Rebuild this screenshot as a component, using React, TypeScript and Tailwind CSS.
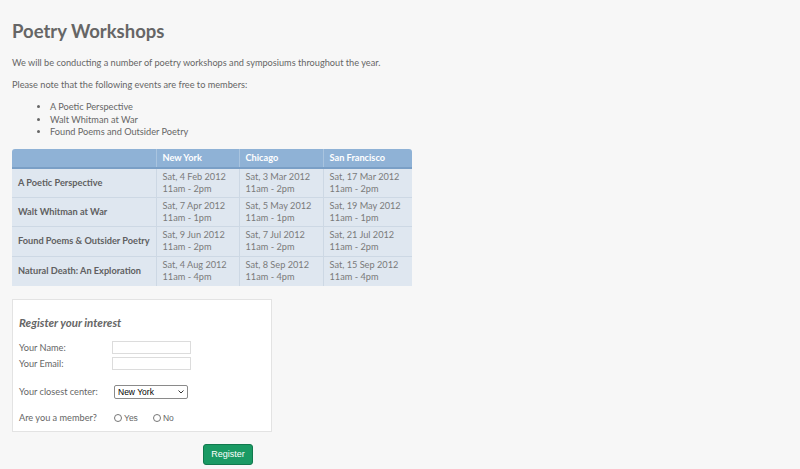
import { useState } from 'react';

const rows = [
  { name: 'A Poetic Perspective', dates: [['Sat, 4 Feb 2012', '11am - 2pm'], ['Sat, 3 Mar 2012', '11am - 2pm'], ['Sat, 17 Mar 2012', '11am - 2pm']] },
  { name: 'Walt Whitman at War', dates: [['Sat, 7 Apr 2012', '11am - 1pm'], ['Sat, 5 May 2012', '11am - 1pm'], ['Sat, 19 May 2012', '11am - 1pm']] },
  { name: 'Found Poems & Outsider Poetry', dates: [['Sat, 9 Jun 2012', '11am - 2pm'], ['Sat, 7 Jul 2012', '11am - 2pm'], ['Sat, 21 Jul 2012', '11am - 2pm']] },
  { name: 'Natural Death: An Exploration', dates: [['Sat, 4 Aug 2012', '11am - 4pm'], ['Sat, 8 Sep 2012', '11am - 4pm'], ['Sat, 15 Sep 2012', '11am - 4pm']] },
];

export default function App() {
  const [member, setMember] = useState('');

  return (
    <div className="min-h-[469px] bg-[#f7f7f7] px-3 pt-[19px] font-['Lato',sans-serif] text-[#666]">
      {/* Header */}
      <h1 className="text-[18.5px] font-bold leading-6 text-[#666]">Poetry Workshops</h1>
      <p className="mt-[14px] text-[9.2px] leading-3">
        We will be conducting a number of poetry workshops and symposiums throughout the year.
      </p>
      <p className="mt-[10px] text-[9.2px] leading-3">Please note that the following events are free to members:</p>
      <ul className="mt-[10px] list-disc pl-[38px] text-[9.2px] leading-[12.5px]">
        <li>A Poetic Perspective</li>
        <li>Walt Whitman at War</li>
        <li>Found Poems and Outsider Poetry</li>
      </ul>

      {/* Schedule table */}
      <table className="mt-[10px] w-[400px] table-fixed border-collapse text-[9.2px]">
        <thead>
          <tr className="h-[19px] bg-[#8fb2d6] text-left font-bold text-white">
            <th className="w-[144px] rounded-tl-[3px] border-b-2 border-[#7a9fc6]"></th>
            <th className="w-[83px] border-b-2 border-l border-[#7a9fc6] border-l-[#a9c4df] px-[6px]">New York</th>
            <th className="w-[84px] border-b-2 border-l border-[#7a9fc6] border-l-[#a9c4df] px-[6px]">Chicago</th>
            <th className="rounded-tr-[3px] border-b-2 border-l border-[#7a9fc6] border-l-[#a9c4df] px-[6px]">San Francisco</th>
          </tr>
        </thead>
        <tbody>
          {rows.map((r, i) => (
            <tr key={i} className="h-[29.5px] border-b border-[#cdd8e4] bg-[#dfe7f0] last:border-b-0">
              <td className="whitespace-nowrap px-[6px] font-bold text-[#606060]">{r.name}</td>
              {r.dates.map((d, j) => (
                <td key={j} className="whitespace-nowrap border-l border-[#cdd8e4] px-[6px] leading-[12px] text-[#7a7a7a]">
                  {d[0]}
                  <br />
                  {d[1]}
                </td>
              ))}
            </tr>
          ))}
        </tbody>
      </table>

      {/* Register form */}
      <div className="mt-[13px] w-[260px] border border-[#e3e3e3] bg-white px-[6px] pb-[6px] pt-[14px] text-[9.2px]">
        <h2 className="text-[11.5px] font-bold italic text-[#666]">Register your interest</h2>
        <div className="mt-[10px] grid grid-cols-[93px_1fr] items-center gap-y-[2px]">
          <label>Your Name:</label>
          <input className="h-[13px] w-[79px] border border-[#dcdcdc] bg-white" />
          <label>Your Email:</label>
          <input className="h-[13px] w-[79px] border border-[#dcdcdc] bg-white" />
        </div>
        <div className="mt-[15px] flex items-center">
          <label className="w-[95px]">Your closest center:</label>
          <div className="relative">
            <select className="h-[14px] w-[74px] appearance-none rounded-[2px] border border-[#8a8a8a] bg-white pl-[3px] font-['Liberation_Sans',sans-serif] text-[8.5px] text-black">
              <option>New York</option>
              <option>Chicago</option>
              <option>San Francisco</option>
            </select>
            <svg className="pointer-events-none absolute right-[4px] top-[5px]" width="6" height="4" viewBox="0 0 6 4" fill="none">
              <path d="M0.5 0.5L3 3L5.5 0.5" stroke="#333" strokeWidth="1" />
            </svg>
          </div>
        </div>
        <div className="mt-[12px] flex items-center">
          <span className="w-[95px]">Are you a member?</span>
          <label className="flex items-center gap-[2px] font-['Liberation_Sans',sans-serif] text-[8.5px]">
            <input type="radio" name="m" checked={member === 'yes'} onChange={() => setMember('yes')} className="m-0 h-[8px] w-[8px]" />
            Yes
          </label>
          <label className="ml-[15px] flex items-center gap-[2px] font-['Liberation_Sans',sans-serif] text-[8.5px]">
            <input type="radio" name="m" checked={member === 'no'} onChange={() => setMember('no')} className="m-0 h-[8px] w-[8px]" />
            No
          </label>
        </div>
      </div>

      <div className="mt-[12px] flex pl-[191px]">
        <button className="h-[21px] w-[50px] rounded-[3px] border border-[#11794d] bg-[#1a9a64] font-['Liberation_Sans',sans-serif] text-[9px] text-white">
          Register
        </button>
      </div>
    </div>
  );
}
